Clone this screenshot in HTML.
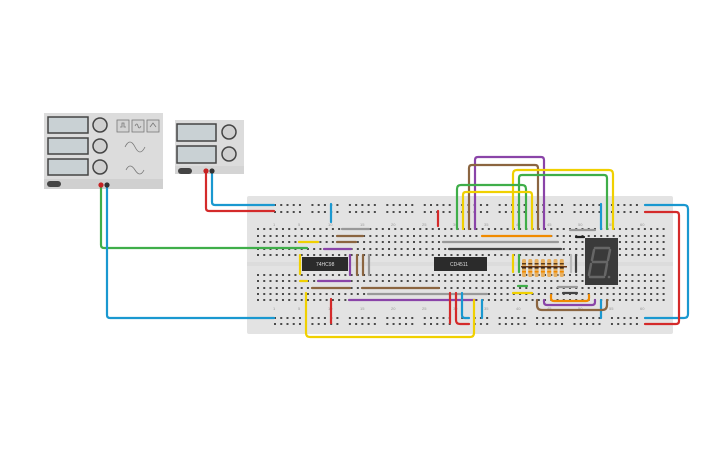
<!DOCTYPE html>
<html><head><meta charset="utf-8"><style>
html,body{margin:0;padding:0;background:#fff;width:725px;height:453px;overflow:hidden}
svg{display:block}
text{font-family:"Liberation Sans",sans-serif}
</style></head><body>
<svg id="s" width="725" height="453" viewBox="0 0 725 453" xmlns="http://www.w3.org/2000/svg">
<!-- power supply bodies -->
<rect x="44" y="113" width="119" height="76" fill="#dcdcdc"/>
<rect x="44" y="179" width="119" height="10" fill="#d0d0d0"/>
<rect x="175" y="120" width="69" height="54" fill="#dcdcdc"/>
<rect x="175" y="166" width="69" height="8" fill="#d4d4d4"/>
<g fill="#c9d1d4" stroke="#444" stroke-width="1.5">
<rect x="48" y="117" width="40" height="16"/><rect x="48" y="138" width="40" height="16"/><rect x="48" y="159" width="40" height="16"/>
<rect x="177" y="124" width="39" height="17"/><rect x="177" y="146" width="39" height="17"/>
</g>
<g fill="#d0d0d0" stroke="#444" stroke-width="1.5">
<circle cx="100" cy="125" r="7"/><circle cx="100" cy="146" r="7"/><circle cx="100" cy="167" r="7"/>
<circle cx="229" cy="132" r="7"/><circle cx="229" cy="154" r="7"/>
</g>
<g fill="#d4d4d4" stroke="#777" stroke-width="0.8">
<rect x="117" y="120" width="12" height="12"/><rect x="132" y="120" width="12" height="12"/><rect x="147" y="120" width="12" height="12"/>
</g>
<g fill="none" stroke="#777" stroke-width="0.8">
<path d="M120 127h2v-4h2v4h2"/><path d="M135 126q2-4 3 0t3 0"/><path d="M150 127l3-4l3 4"/>
<path d="M125 147q5-10 10 0t10 0"/><path d="M126 170q4-8 9 0t9 0"/>
</g>
<rect x="47" y="181" width="14" height="6" rx="3" fill="#444"/>
<rect x="178" y="168" width="14" height="6" rx="3" fill="#444"/>
<!-- breadboard -->
<rect x="247" y="196" width="426" height="138" rx="2" fill="#e3e3e3"/>
<rect x="247" y="262" width="426" height="4" fill="#dcdcdc"/>
<g id="dots" fill="#4a4a4a"></g>
<g font-size="4" fill="#999">
<text x="273" y="226">1</text><text x="298" y="226">5</text><text x="328" y="226">10</text><text x="360" y="226">15</text><text x="391" y="226">20</text><text x="422" y="226">25</text><text x="453" y="226">30</text><text x="484" y="226">35</text><text x="516" y="226">40</text><text x="547" y="226">45</text><text x="578" y="226">50</text><text x="609" y="226">55</text><text x="640" y="226">60</text>
<text x="273" y="310">1</text><text x="298" y="310">5</text><text x="328" y="310">10</text><text x="360" y="310">15</text><text x="391" y="310">20</text><text x="422" y="310">25</text><text x="453" y="310">30</text><text x="484" y="310">35</text><text x="516" y="310">40</text><text x="547" y="310">45</text><text x="578" y="310">50</text><text x="609" y="310">55</text><text x="640" y="310">60</text>
</g>
<rect x="302" y="257" width="46" height="14" fill="#2b2b2b"/>
<text x="316" y="266" font-size="5" fill="#ddd">74HC98</text>
<rect x="434" y="257" width="53" height="14" fill="#2b2b2b"/>
<text x="450" y="266" font-size="5" fill="#ddd">CD4511</text>
<g fill="none" stroke-width="2.2" stroke-linecap="round" stroke-linejoin="round">
<path d="M101 187V245q0 3 3 3H307" stroke="#3fae49"/>
<path d="M107 187V315q0 3 3 3H274" stroke="#1a98d0"/>
<path d="M206 174V208q0 3 3 3H274" stroke="#d42a2a"/>
<path d="M212 174V202q0 3 3 3H274" stroke="#1a98d0"/>
<path d="M645 205H684q4 0 4 4V314q0 4-4 4H645" stroke="#1a98d0"/>
<path d="M645 212H676q3 0 3 3V321q0 3-3 3H645" stroke="#d42a2a"/>
<path d="M475 229V160q0-3 3-3H541q3 0 3 3V229" stroke="#8a44a8"/>
<path d="M469 229V168q0-3 3-3H535q3 0 3 3V229" stroke="#8b6540"/>
<path d="M513 229V174q0-4 4-4H609q4 0 4 4V229" stroke="#f0d000"/>
<path d="M519 229V178q0-3 3-3H604q3 0 3 3V229" stroke="#3fae49"/>
<path d="M457 229V189q0-4 4-4H522q4 0 4 4V229" stroke="#3fae49"/>
<path d="M463 229V195q0-3 3-3H529q3 0 3 3V229" stroke="#f0d000"/>
<path d="M331 204V222" stroke="#1a98d0"/>
<path d="M601 204V229" stroke="#1a98d0"/>
<path d="M438 211V226" stroke="#d42a2a"/>
<path d="M482 236H551" stroke="#f08a00"/>
<path d="M443 242H558" stroke="#999"/>
<path d="M449 249H561" stroke="#444"/>
<path d="M342 229H369" stroke="#999"/>
<path d="M337 236H363" stroke="#8b6540"/>
<path d="M337 242H356" stroke="#8b6540"/>
<path d="M324 249H351" stroke="#8a44a8"/>
<path d="M299 242H318" stroke="#f0d000"/>
<path d="M300 255V274" stroke="#f0d000"/>
<path d="M350 255V275" stroke="#8a44a8"/>
<path d="M357 255V275" stroke="#8b6540"/>
<path d="M363 255V275" stroke="#8b6540"/>
<path d="M369 255V275" stroke="#999"/>
<path d="M318 281H350" stroke="#8a44a8"/>
<path d="M300 281H307" stroke="#f0d000"/>
<path d="M312 288H350" stroke="#8b6540"/>
<path d="M362 288H439" stroke="#8b6540"/>
<path d="M368 294H487" stroke="#999"/>
<path d="M349 300H475" stroke="#8a44a8"/>
<path d="M331 299V323" stroke="#d42a2a"/>
<path d="M306 293V333q0 4 4 4H470q4 0 4-4V300" stroke="#f0d000"/>
<path d="M450 293V323" stroke="#d42a2a"/>
<path d="M456 293V320q0 4 4 4H469" stroke="#d42a2a"/>
<path d="M462 293V315q0 3 3 3H469" stroke="#1a98d0"/>
<path d="M482 300V318" stroke="#1a98d0"/>
<path d="M601 300V318" stroke="#1a98d0"/>
<path d="M537 300V305q0 5 5 5H602q5 0 5-5V300" stroke="#8b6540"/>
<path d="M544 300V302q0 3 3 3H592q3 0 3-3V300" stroke="#8a44a8"/>
<path d="M551 295V298q0 3 3 3H586q3 0 3-3V295" stroke="#f08a00"/>
<path d="M518 286H527" stroke="#3fae49"/>
<path d="M513 293H532" stroke="#f0d000"/>
<path d="M563 293H577" stroke="#444"/>
<path d="M558 287H577" stroke="#999"/>
<path d="M570 230H595" stroke="#999"/>
<path d="M576 255V272" stroke="#444"/>
<path d="M571 255V272" stroke="#bbb"/>
<path d="M513 255V272" stroke="#f0d000"/>
<path d="M519 255V272" stroke="#3fae49"/>
<path d="M576 237H584" stroke="#222"/>
</g>
<g id="res"></g>
<rect x="585" y="238" width="33" height="47" fill="#3a3a3a"/>
<g fill="none" stroke="#666" stroke-width="2.5" stroke-linecap="round">
<path d="M595 248H609M594 250L592 260M610 250L608 260M593 262H607M591 264L589 275M607 264L605 275M590 277H604"/>
</g>
<circle cx="609" cy="277" r="1.3" fill="#666"/>
<circle cx="101" cy="185" r="2.6" fill="#c52222"/><circle cx="107" cy="185" r="2.6" fill="#333"/>
<circle cx="206" cy="171" r="2.6" fill="#c52222"/><circle cx="212" cy="171" r="2.6" fill="#333"/>
</svg>
<script>
var g=document.getElementById("dots"),h="";
function d(x,y){h+='<rect x="'+(x-1)+'" y="'+(y-1)+'" width="2" height="2"/>';}
var P=6.24;
[205,212,318,324].forEach(function(y){for(var c=0;c<60;c++){if(c%6==5)continue;d(275+c*P,y);}});
[229,236,242,249,255,275,281,288,294,300].forEach(function(y){for(var c=0;c<66;c++)d(258+c*P,y);});
g.innerHTML=h;
var r="";for(var i=0;i<7;i++){var x=524+i*6.3;r+='<rect x="'+(x-2)+'" y="259" width="4" height="18" rx="1.5" fill="#e8b060"/><rect x="'+(x-2)+'" y="263" width="4" height="1.5" fill="#5a3a1a"/><rect x="'+(x-2)+'" y="267" width="4" height="1.5" fill="#111"/><rect x="'+(x-2)+'" y="271" width="4" height="1.5" fill="#f08a00"/>';}
r+='<rect x="521" y="266" width="46" height="1.5" fill="#6a3a1a"/>';
document.getElementById("res").innerHTML=r;
</script>
</body></html>
